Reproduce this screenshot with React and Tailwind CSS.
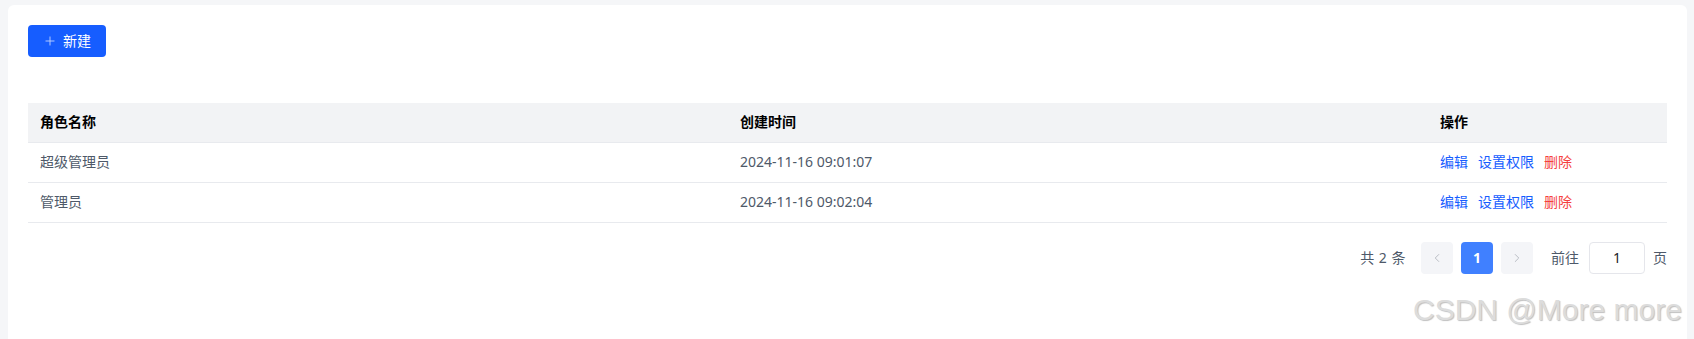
import { Plus, ChevronLeft, ChevronRight } from "lucide-react";

const roles = [
  { name: "超级管理员", time: "2024-11-16 09:01:07" },
  { name: "管理员", time: "2024-11-16 09:02:04" },
];

export default function App() {
  return (
    <div
      className="relative h-[339px] overflow-hidden bg-[#f5f6f8] pl-2 pr-[7px] pt-[5px] text-sm"
      style={{ fontFamily: '"Noto Sans", "Noto Sans CJK SC", sans-serif' }}
    >
      <div className="h-[400px] rounded-md bg-white px-5 pt-5">
        {/* Toolbar */}
        <button className="flex h-8 w-[78px] items-center justify-center gap-1.5 rounded bg-[#165dff] text-sm text-white">
          <Plus size={14} strokeWidth={1.6} className="text-[#bcd0ff]" />
          新建
        </button>

        {/* Table */}
        <table className="mt-[46px] w-full table-fixed border-collapse text-left">
          <colgroup>
            <col className="w-[700px]" />
            <col className="w-[700px]" />
            <col />
          </colgroup>
          <thead>
            <tr className="h-[39px] border-b border-[#e8eaee] bg-[#f2f3f5]">
              <th className="px-3 font-bold text-black">角色名称</th>
              <th className="px-3 font-bold text-black">创建时间</th>
              <th className="px-3 font-bold text-black">操作</th>
            </tr>
          </thead>
          <tbody>
            {roles.map((r) => (
              <tr key={r.name} className="h-10 border-b border-[#e8eaee] text-[#4e5969]">
                <td className="px-3">{r.name}</td>
                <td className="px-3">{r.time}</td>
                <td className="px-3">
                  <div className="flex gap-2.5">
                    <a className="text-[#165dff]">编辑</a>
                    <a className="text-[#165dff]">设置权限</a>
                    <a className="text-[#f53f3f]">删除</a>
                  </div>
                </td>
              </tr>
            ))}
          </tbody>
        </table>

        {/* Pagination */}
        <div className="mt-[19px] flex items-center justify-end text-[#4e5969]">
          <span className="mr-[15px] tracking-[0.5px]">共 2 条</span>
          <div className="flex gap-2">
            <button className="flex h-8 w-8 items-center justify-center rounded-sm bg-[#f4f5f8] text-[#b0b5bd]">
              <ChevronLeft size={14} strokeWidth={1.5} />
            </button>
            <button className="flex h-8 w-8 items-center justify-center rounded-sm bg-[#4080ff] font-bold text-white">
              1
            </button>
            <button className="flex h-8 w-8 items-center justify-center rounded-sm bg-[#f4f5f8] text-[#b0b5bd]">
              <ChevronRight size={14} strokeWidth={1.5} />
            </button>
          </div>
          <span className="ml-[18px]">前往</span>
          <div className="ml-2.5 flex h-8 w-14 items-center justify-center rounded border border-[#e5e6eb] text-[#1d2129]">
            1
          </div>
          <span className="ml-2">页</span>
        </div>
      </div>

      {/* Watermark */}
      <div
        className="absolute left-[1413px] top-[289px] whitespace-nowrap text-[30px] text-[#dcdcdc]"
        style={{ fontFamily: '"Liberation Sans", Arial, sans-serif', textShadow: "1px 1px 1px rgba(0,0,0,0.25)" }}
      >
        CSDN @More more
      </div>
    </div>
  );
}
